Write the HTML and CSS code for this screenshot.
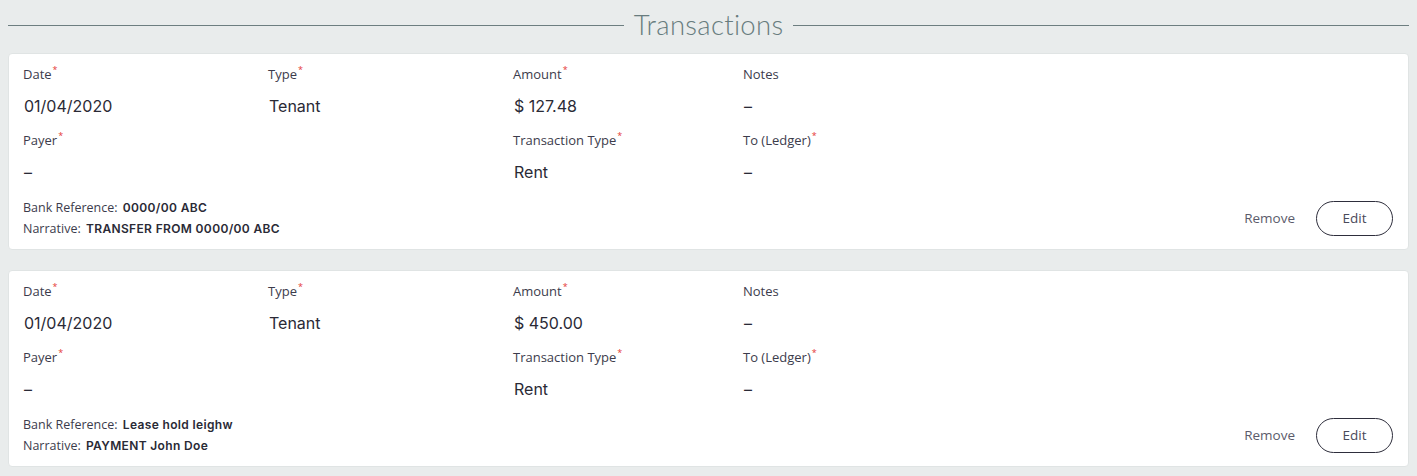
FILE: index.html
```html
<!DOCTYPE html>
<html lang="en">
<head>
<meta charset="utf-8">
<title>Transactions</title>
<link rel="stylesheet" href="styles.css">
</head>
<body>
<div class="page">
  <div class="section-title"><span class="rule"></span><h2>Transactions</h2><span class="rule"></span></div>

  <div class="card">
    <div class="fields">
      <div class="field"><div class="label">Date<sup>*</sup></div><div class="value">01/04/2020</div></div>
      <div class="field"><div class="label">Type<sup>*</sup></div><div class="value">Tenant</div></div>
      <div class="field"><div class="label">Amount<sup>*</sup></div><div class="value">$ 127.48</div></div>
      <div class="field"><div class="label">Notes</div><div class="value">–</div></div>
      <div class="field"><div class="label">Payer<sup>*</sup></div><div class="value">–</div></div>
      <div class="field"></div>
      <div class="field"><div class="label">Transaction Type<sup>*</sup></div><div class="value">Rent</div></div>
      <div class="field"><div class="label">To (Ledger)<sup>*</sup></div><div class="value">–</div></div>
    </div>
    <div class="footer">
      <div class="meta">
        <div class="meta-line">Bank Reference: <b>0000/00 ABC</b></div>
        <div class="meta-line">Narrative: <b>TRANSFER FROM 0000/00 ABC</b></div>
      </div>
      <div class="actions">
        <button class="btn-link">Remove</button>
        <button class="btn-outline">Edit</button>
      </div>
    </div>
  </div>

  <div class="card">
    <div class="fields">
      <div class="field"><div class="label">Date<sup>*</sup></div><div class="value">01/04/2020</div></div>
      <div class="field"><div class="label">Type<sup>*</sup></div><div class="value">Tenant</div></div>
      <div class="field"><div class="label">Amount<sup>*</sup></div><div class="value">$ 450.00</div></div>
      <div class="field"><div class="label">Notes</div><div class="value">–</div></div>
      <div class="field"><div class="label">Payer<sup>*</sup></div><div class="value">–</div></div>
      <div class="field"></div>
      <div class="field"><div class="label">Transaction Type<sup>*</sup></div><div class="value">Rent</div></div>
      <div class="field"><div class="label">To (Ledger)<sup>*</sup></div><div class="value">–</div></div>
    </div>
    <div class="footer">
      <div class="meta">
        <div class="meta-line">Bank Reference: <b>Lease hold leighw</b></div>
        <div class="meta-line">Narrative: <b>PAYMENT John Doe</b></div>
      </div>
      <div class="actions">
        <button class="btn-link">Remove</button>
        <button class="btn-outline">Edit</button>
      </div>
    </div>
  </div>
</div>
</body>
</html>
```

FILE: styles.css
```css
html, body {
  margin: 0;
  padding: 0;
  background: #e9ecec;
}
body {
  font-family: "Open Sans", "Noto Sans", sans-serif;
  color: #2e2e3c;
}
.page {
  padding: 0 8px;
}
.section-title {
  height: 50px;
  display: flex;
  align-items: center;
  gap: 10px;
  margin-bottom: 3px;
}
.section-title .rule {
  flex: 1;
  height: 1px;
  background: #6d7e80;
}
.section-title h2 {
  margin: 0;
  font-family: Lato, "Open Sans", sans-serif;
  font-weight: 300;
  font-size: 27.5px;
  line-height: 30px;
  color: #687c7e;
  letter-spacing: 0.3px;
}
.card {
  background: #fff;
  border-radius: 4px;
  border: 1px solid #e0e4e4;
  box-sizing: border-box;
  padding: 11px 15px 10px;
  margin-bottom: 20px;
}
.fields {
  display: grid;
  grid-template-columns: 245px 245px 230px 1fr;
  row-gap: 16px;
}
.label {
  font-size: 13px;
  line-height: 18px;
  height: 18px;
  color: #3c3c4c;
  margin-bottom: 14px;
  margin-left: -1px;
}
.label sup {
  color: #e53935;
  font-size: 9px;
  line-height: 0;
  vertical-align: 6px;
  margin-left: 1px;
}
.value {
  font-family: Inter, "Noto Sans", sans-serif;
  font-size: 16px;
  line-height: 18px;
  height: 18px;
  color: #2a2a36;
}
.field:empty {
  height: 50px;
}
.footer {
  margin-top: 16px;
  display: flex;
  align-items: center;
  justify-content: space-between;
}
.meta-line {
  font-size: 12.5px;
  line-height: 21px;
  height: 21px;
  color: #3c3c4c;
  margin-left: -1px;
}
.meta-line b {
  font-family: Inter, "Noto Sans", sans-serif;
  font-weight: 600;
  font-size: 12px;
  letter-spacing: 0.35px;
  color: #2a2a36;
  margin-left: 2px;
}
.actions {
  display: flex;
  align-items: center;
  gap: 21px;
}
.btn-link {
  background: none;
  border: none;
  padding: 0;
  font-family: "Open Sans", sans-serif;
  font-size: 13.5px;
  color: #5b5b6b;
  cursor: pointer;
}
.btn-outline {
  width: 77px;
  height: 35px;
  border: 1px solid #2e2e3c;
  border-radius: 18px;
  background: #fff;
  font-family: "Open Sans", sans-serif;
  font-size: 13.5px;
  color: #4a4a5a;
  cursor: pointer;
}
```
